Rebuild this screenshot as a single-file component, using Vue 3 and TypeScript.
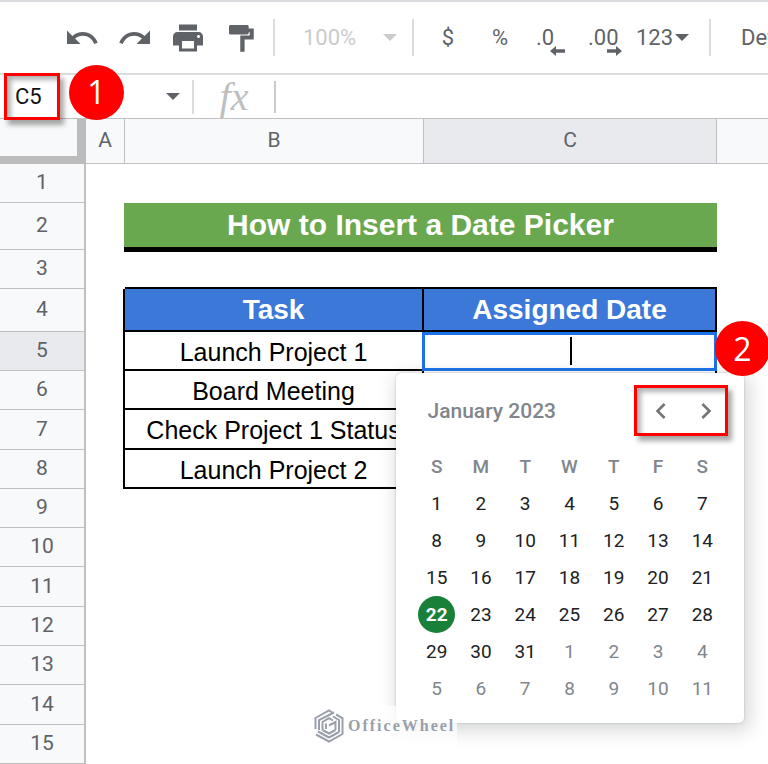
<script setup lang="ts">
import { ref } from 'vue'

interface SheetRow {
  number: number
  height: number
  kind: 'blank' | 'title' | 'edge' | 'heading' | 'data' | 'active'
  task?: string
}

interface Day {
  label: number
  outside: boolean
  today: boolean
}

const rows: SheetRow[] = [
  { number: 1, height: 39, kind: 'blank' },
  { number: 2, height: 47, kind: 'title', task: 'How to Insert a Date Picker' },
  { number: 3, height: 39, kind: 'edge' },
  { number: 4, height: 43, kind: 'heading', task: 'Task' },
  { number: 5, height: 39, kind: 'active', task: 'Launch Project 1' },
  { number: 6, height: 39, kind: 'data', task: 'Board Meeting' },
  { number: 7, height: 40, kind: 'data', task: 'Check Project 1 Status' },
  { number: 8, height: 39, kind: 'data', task: 'Launch Project 2' },
  { number: 9, height: 39, kind: 'blank' },
  { number: 10, height: 39, kind: 'blank' },
  { number: 11, height: 40, kind: 'blank' },
  { number: 12, height: 39, kind: 'blank' },
  { number: 13, height: 39, kind: 'blank' },
  { number: 14, height: 40, kind: 'blank' },
  { number: 15, height: 39, kind: 'blank' },
]

const weekdays: string[] = ['S', 'M', 'T', 'W', 'T', 'F', 'S']

const weeks: Day[][] = Array.from({ length: 6 }, (_, week) =>
  Array.from({ length: 7 }, (_, day) => {
    const n = week * 7 + day + 1
    return { label: n > 31 ? n - 31 : n, outside: n > 31, today: n === 22 }
  }),
)

const cellName = ref('C5')
const dateValue = ref('')
</script>

<template>
  <main class="app">
    <div class="toolbar" role="toolbar">
      <div class="icons">
        <button class="icon" aria-label="Undo">
          <svg viewBox="0 0 24 24"><path d="M12.5 8c-2.65 0-5.05.99-6.9 2.6L2 7v9h9l-3.62-3.62c1.39-1.16 3.16-1.88 5.12-1.88 3.54 0 6.55 2.31 7.6 5.5l2.37-.78C21.08 11.03 17.15 8 12.5 8z" /></svg>
        </button>
        <button class="icon" aria-label="Redo">
          <svg viewBox="0 0 24 24"><path d="M18.4 10.6C16.55 8.99 14.15 8 11.5 8c-4.65 0-8.58 3.03-9.96 7.22L3.9 16c1.05-3.19 4.05-5.5 7.6-5.5 1.95 0 3.73.72 5.12 1.88L13 16h9V7l-3.6 3.6z" /></svg>
        </button>
        <button class="icon" aria-label="Print">
          <svg viewBox="0 0 24 24"><path d="M19 8H5c-1.66 0-3 1.34-3 3v6h4v4h12v-4h4v-6c0-1.66-1.34-3-3-3zm-3 11H8v-5h8v5zm3-7c-.55 0-1-.45-1-1s.45-1 1-1 1 .45 1 1-.45 1-1 1zm-1-9H6v4h12V3z" /></svg>
        </button>
        <button class="icon" aria-label="Paint format">
          <svg viewBox="0 0 24 24"><path d="M5 3.3h11.200c.5 0 .9.4.9.9v1.400h3.400v7.400h-6.100v8.200h-2.900V10.400h6.300V8.200h-.7v.5c0 .5-.4.9-.9.9H5c-.6 0-1-.4-1-1V4.300c0-.6.4-1 1-1z" /></svg>
        </button>
      </div>
      <span class="rule"></span>
      <label class="zoom">
        <select aria-label="Zoom" disabled>
          <option>100%</option>
        </select>
        <svg class="arrow" viewBox="0 0 14 7"><path d="M0 0h14l-7 7z" /></svg>
      </label>
      <span class="rule"></span>
      <div class="formats">
        <button aria-label="Format as currency">$</button>
        <button aria-label="Format as percent">%</button>
        <button class="decimal" aria-label="Decrease decimal places">
          .0
          <svg viewBox="0 0 15 10"><path d="M0 5l6-5v3.300h9v3.400H6V10z" /></svg>
        </button>
        <button class="decimal" aria-label="Increase decimal places">
          .00
          <svg viewBox="0 0 15 10"><path d="M15 5L9 0v3.300H0v3.400h9V10z" /></svg>
        </button>
        <button class="more" aria-label="More formats">
          123<svg class="arrow" viewBox="0 0 14 7"><path d="M0 0h14l-7 7z" /></svg>
        </button>
      </div>
      <span class="rule"></span>
      <label class="font">
        <select aria-label="Font">
          <option>Default</option>
        </select>
      </label>
    </div>

    <div class="formula-bar">
      <label class="name-box">
        <input v-model="cellName" aria-label="Name box" />
        <svg class="arrow" viewBox="0 0 14 7"><path d="M0 0h14l-7 7z" /></svg>
        <span class="frame name-frame"></span>
        <span class="badge badge-one">1</span>
      </label>
      <span class="fx">fx</span>
      <input class="formula" aria-label="Formula" />
    </div>

    <div class="sheet">
      <table class="grid">
        <colgroup>
          <col class="col-number" />
          <col class="col-a" />
          <col class="col-b" />
          <col class="col-c" />
          <col />
        </colgroup>
        <thead>
          <tr>
            <td class="corner"></td>
            <th scope="col">A</th>
            <th scope="col">B</th>
            <th scope="col" class="current">C</th>
            <th scope="col" class="last"></th>
          </tr>
        </thead>
        <tbody>
          <tr v-for="row in rows" :key="row.number" :class="row.kind" :style="{ height: row.height + 'px' }">
            <th scope="row">{{ row.number }}</th>
            <td class="a"></td>
            <template v-if="row.kind === 'title'">
              <td colspan="2" class="banner"><div>{{ row.task }}</div></td>
            </template>
            <template v-else>
              <td class="b">{{ row.task }}</td>
              <td class="c">
                <template v-if="row.kind === 'heading'">Assigned Date</template>
                <div v-if="row.kind === 'active'" class="editor">
                  <input v-model="dateValue" aria-label="Assigned date" />
                  <span class="caret"></span>

                  <section class="picker" aria-label="Date picker">
                    <header>
                      <h2>January 2023</h2>
                      <div class="nav">
                        <button aria-label="Previous month">
                          <svg viewBox="0 0 24 24"><path d="M15.410 7.410 14 6l-6 6 6 6 1.410-1.410L10.830 12z" /></svg>
                        </button>
                        <button aria-label="Next month">
                          <svg viewBox="0 0 24 24"><path d="M10 6 8.590 7.410 13.170 12l-4.580 4.590L10 18l6-6z" /></svg>
                        </button>
                        <span class="frame nav-frame"></span>
                      </div>
                    </header>
                    <table class="calendar">
                      <thead>
                        <tr>
                          <th v-for="(name, i) in weekdays" :key="i" scope="col">{{ name }}</th>
                        </tr>
                      </thead>
                      <tbody>
                        <tr v-for="(week, i) in weeks" :key="i">
                          <td v-for="(day, j) in week" :key="j">
                            <button :class="{ outside: day.outside, today: day.today }">{{ day.label }}</button>
                          </td>
                        </tr>
                      </tbody>
                    </table>
                  </section>
                  <span class="badge badge-two">2</span>
                </div>
              </td>
            </template>
            <td></td>
          </tr>
        </tbody>
      </table>

      <div class="watermark">
        <svg viewBox="0 0 30 34">
          <path d="M1.500 20V9L15 1.500 19 4M5 21V11L20 3.500M8.500 21V13L15 9.200 19 11.500M28.500 13v12L15 32.500 2 25.500M28.500 13V9L22 5.500M25 23V11l-6-3.500M15 28.500 4 22.500M15 28.500 25 23M21.500 21v-8L15 16.500M8.500 21 15 24.500l6.500-3.500M12 20v-5.500" />
        </svg>
        <span>OfficeWheel</span>
      </div>
    </div>
  </main>
</template>

<style>
body {
  background: #fff;
  overflow: hidden;
}
</style>

<style scoped>
.app {
  font-family: Roboto, 'Liberation Sans', sans-serif;
  font-size: 22px;
  color: #5f6368;
  overflow: hidden;
}

button,
input,
select {
  margin: 0;
  padding: 0;
  border: 0;
  background: none;
  color: inherit;
  font: inherit;
  outline: none;
  appearance: none;
  opacity: 1;
}

svg {
  display: block;
  fill: currentColor;
}

.arrow {
  width: 14px;
  height: 7px;
  flex: none;
}

.toolbar {
  display: flex;
  align-items: center;
  height: 73px;
  box-sizing: border-box;
  border-top: 2px solid #dadce0;
  padding-left: 64px;
  white-space: nowrap;
}

.icons {
  display: flex;
  gap: 17px;
  margin-right: 14px;
}

.icon svg {
  width: 36px;
  height: 36px;
}

.rule {
  width: 2px;
  height: 37px;
  flex: none;
  background: #dadce0;
}

.zoom {
  display: flex;
  align-items: center;
  justify-content: space-between;
  width: 94px;
  flex: none;
  margin: 0 15px 0 28px;
  color: #c9cbcd;
}

.zoom select {
  width: 60px;
}

.formats {
  display: flex;
  align-items: center;
  flex: none;
  padding: 0 17px 0 8px;
}

.formats button {
  width: 52px;
  flex: none;
}

.formats .decimal {
  position: relative;
  text-align: left;
  padding-left: 10px;
}

.decimal svg {
  position: absolute;
  left: 24px;
  bottom: -6px;
  width: 15px;
  height: 10px;
}

.decimal + .decimal svg {
  left: 29px;
}

.formats .more {
  display: flex;
  align-items: center;
  gap: 2px;
  width: 56px;
  margin-left: 6px;
}

.font {
  margin-left: 30px;
  flex: none;
}

.formula-bar {
  display: flex;
  align-items: center;
  height: 45px;
  box-sizing: border-box;
  border-top: 2px solid #dadce0;
}

.name-box {
  position: relative;
  display: flex;
  align-items: center;
  width: 194px;
  height: 34px;
  flex: none;
  box-sizing: border-box;
  border-right: 2px solid #dadce0;
  padding: 0 12px 0 15px;
}

.name-box input {
  flex: 1;
  min-width: 0;
  color: #111;
}

.fx {
  width: 82px;
  box-sizing: border-box;
  border-right: 2px solid #c8cacc;
  text-align: center;
  font: italic 40px/32px 'Liberation Serif', serif;
  color: #bdbfc1;
}

.formula {
  flex: 1;
  min-width: 0;
}

.frame {
  position: absolute;
  box-sizing: border-box;
  border: 3px solid #f00;
  box-shadow: 4px 5px 5px rgba(0, 0, 0, 0.35), inset 4px 4px 5px rgba(0, 0, 0, 0.3);
  pointer-events: none;
  z-index: 3;
}

.name-frame {
  left: 4px;
  top: -7px;
  width: 56px;
  height: 47px;
}

.badge {
  position: absolute;
  display: flex;
  align-items: center;
  justify-content: center;
  width: 55px;
  height: 55px;
  border-radius: 50%;
  background: #f00;
  color: #fff;
  font: 32px/1 'Open Sans', sans-serif;
  z-index: 3;
}

.badge-one {
  left: 69px;
  top: -15px;
}

.sheet {
  position: relative;
}

.grid {
  width: 100%;
  table-layout: fixed;
  border-collapse: separate;
  border-spacing: 0;
  border-top: 1px solid #c0c0c0;
}

.grid th,
.grid td {
  box-sizing: border-box;
  padding: 0;
}

.col-number {
  width: 86px;
}

.col-a {
  width: 39px;
}

.col-b {
  width: 299px;
}

.col-c {
  width: 293px;
}

.grid > thead > tr {
  height: 45px;
}

.grid > thead th,
.grid > tbody > tr > th {
  background: #f8f9fa;
  border: solid #c0c0c0;
  border-width: 0 1px 1px 0;
  padding-bottom: 2px;
  font-size: 21px;
  font-weight: 400;
  line-height: 24px;
}

.grid > tbody > tr > th {
  border-right-width: 2px;
}

.grid > thead th.last {
  border-right: 0;
}

.grid > thead th.current,
.grid > tbody > .active > th {
  background: #e8eaed;
}

.corner {
  background: #f8f9fa;
  border: solid #bcbcbc;
  border-width: 0 9px 8px 0;
}

.grid > tbody > tr > td {
  text-align: center;
  white-space: nowrap;
  font: 25px/28px 'Liberation Sans', Arial, sans-serif;
  color: #000;
}

.grid > tbody > tr.data > .b,
.grid > tbody > tr.active > .b {
  padding-top: 2px;
}

.grid > tbody > .title > .banner {
  color: #fff;
  font-size: 30px;
  font-weight: 700;
}

.banner div {
  height: 49px;
  box-sizing: border-box;
  margin: -1px 0 -2px -1px;
  border-bottom: 5px solid #000;
  background: #6aa84f;
  line-height: 44px;
}

.grid > tbody > .heading > .b,
.grid > tbody > .heading > .c {
  background: #3c78d8;
  color: #fff;
  font-size: 28px;
  font-weight: 700;
}

.edge > .b,
.edge > .c,
.heading > .b,
.heading > .c,
.data > .b,
.data > .c,
.active > .b {
  border-bottom: 2px solid #000;
}

.heading > .b,
.heading > .c,
.data > .b,
.data > .c,
.active > .b {
  border-right: 2px solid #000;
}

.heading > .a,
.data > .a,
.active > .a {
  border-right: 2px solid #000;
}

.editor {
  position: relative;
  display: flex;
  height: 39px;
  box-sizing: border-box;
  border: 3px solid #1a73e8;
  margin-left: -2px;
  background: #fff;
}

.editor > input {
  width: 100%;
  text-align: center;
  caret-color: transparent;
}

.caret {
  position: absolute;
  left: 50%;
  top: 2px;
  width: 2px;
  height: 28px;
  background: #000;
}

.badge-two {
  right: -56px;
  top: -14px;
}

.picker {
  position: absolute;
  top: calc(100% + 5px);
  left: 50%;
  width: 348px;
  box-sizing: border-box;
  padding: 0 19px 16px;
  transform: translateX(-50%);
  border-radius: 5px;
  background: #fff;
  box-shadow: 0 0 2px rgba(60, 64, 67, 0.35), 3px 5px 18px 3px rgba(60, 64, 67, 0.2);
  font: 19px/22px Roboto, sans-serif;
  color: #202124;
  z-index: 2;
}

.picker header {
  display: flex;
  align-items: center;
  justify-content: space-between;
  height: 75px;
  padding-left: 13px;
}

.picker h2 {
  margin: 0;
  font-size: 21px;
  font-weight: 500;
  color: #80868b;
}

.nav {
  position: relative;
  display: flex;
  margin-right: -4px;
  color: #757575;
}

.nav button {
  display: flex;
  align-items: center;
  justify-content: center;
  width: 45px;
  height: 45px;
}

.nav svg {
  width: 32px;
  height: 32px;
}

.nav-frame {
  inset: -3px 1px -3px -5px;
}

.calendar {
  width: 100%;
  table-layout: fixed;
  border-collapse: collapse;
}

.calendar th {
  height: 37px;
  padding: 0;
  font-weight: 500;
  color: #80868b;
}

.calendar td {
  padding: 0;
  text-align: center;
}

.calendar button {
  width: 37px;
  height: 37px;
  border-radius: 50%;
  display: block;
  margin: 0 auto;
}

.calendar .outside {
  color: #80868b;
}

.calendar .today {
  background: #188038;
  color: #fff;
  font-weight: 700;
}

.watermark {
  position: absolute;
  left: 308px;
  bottom: 18px;
  display: flex;
  align-items: center;
  gap: 4px;
  height: 40px;
  padding: 0 2px 0 6px;
  background: rgba(255, 255, 255, 0.7);
  color: #9a9fac;
  font: 700 16px/20px 'Liberation Serif', serif;
  letter-spacing: 2px;
  z-index: 3;
}

.watermark svg {
  width: 30px;
  height: 34px;
  fill: none;
  stroke: currentColor;
  stroke-width: 2px;
}
</style>
